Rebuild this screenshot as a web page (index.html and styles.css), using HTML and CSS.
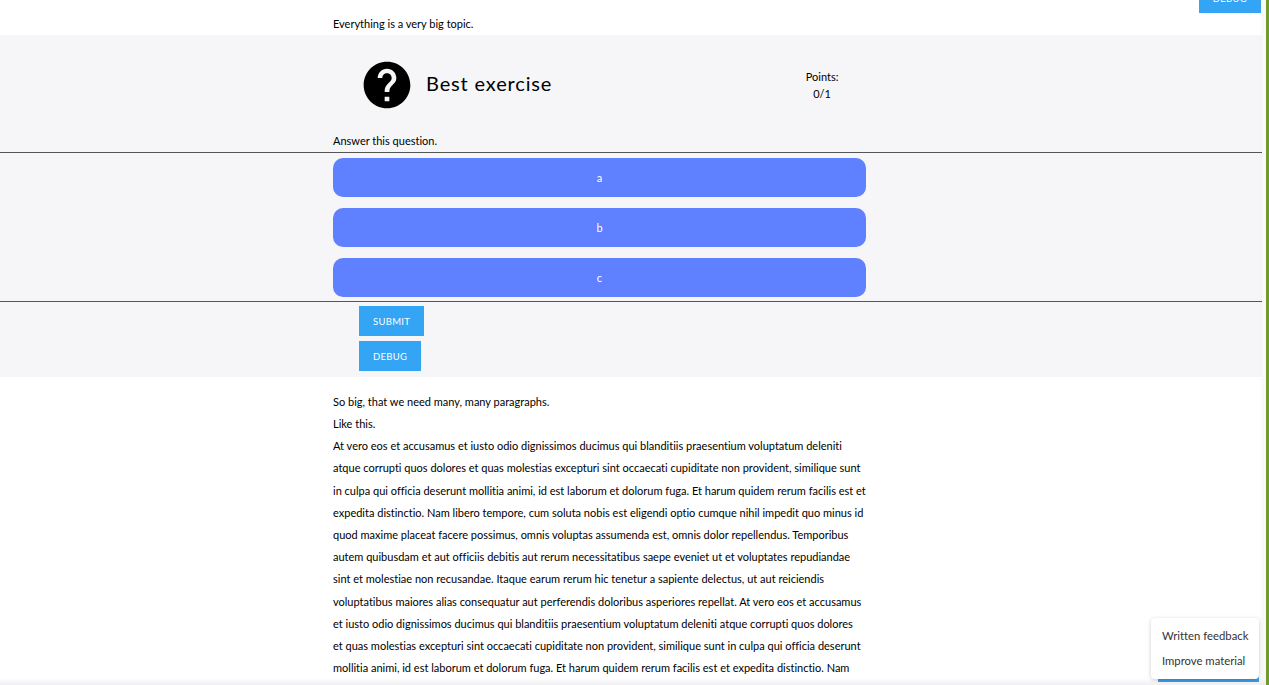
FILE: index.html
```html
<!DOCTYPE html>
<html lang="en">
<head>
  <meta charset="UTF-8">
  <title>Best exercise</title>
  <link rel="stylesheet" href="styles.css">
</head>
<body>

<div class="page">
  <div class="top-bar">
    <button type="button" class="btn">DEBUG</button>
  </div>

  <div class="column intro">
    <p>Everything is a very big topic.</p>
  </div>

  <!-- Exercise -->
  <section class="exercise">
    <div class="column">
      <div class="exercise-head">
        <div class="exercise-title">
          <svg class="help-icon" viewBox="0 0 24 24" width="56" height="56">
            <path d="M12 2C6.48 2 2 6.48 2 12s4.48 10 10 10 10-4.48 10-10S17.52 2 12 2zm1 17h-2v-2h2v2zm2.07-7.75l-.9.92C13.45 12.9 13 13.5 13 15h-2v-.5c0-1.1.45-2.1 1.17-2.83l1.24-1.26c.37-.36.59-.86.59-1.41 0-1.1-.9-2-2-2s-2 .9-2 2H8c0-2.21 1.79-4 4-4s4 1.79 4 4c0 .88-.36 1.68-.93 2.25z"/>
          </svg>
          <h2>Best exercise</h2>
        </div>
        <div class="points">
          <div>Points:</div>
          <div>0/1</div>
        </div>
      </div>
      <p class="assignment">Answer this question.</p>
    </div>

    <div class="options">
      <div class="column option-list">
        <button type="button" class="option">a</button>
        <button type="button" class="option">b</button>
        <button type="button" class="option">c</button>
      </div>
    </div>

    <div class="column actions">
      <button type="button" class="btn">SUBMIT</button>
      <button type="button" class="btn">DEBUG</button>
    </div>
  </section>

  <!-- Material -->
  <div class="column material">
    <p>So big, that we need many, many paragraphs.</p>
    <p>Like this.</p>
    <p>At vero eos et accusamus et iusto odio dignissimos ducimus qui blanditiis praesentium voluptatum deleniti<br>
    atque corrupti quos dolores et quas molestias excepturi sint occaecati cupiditate non provident, similique sunt<br>
    in culpa qui officia deserunt mollitia animi, id est laborum et dolorum fuga. Et harum quidem rerum facilis est et<br>
    expedita distinctio. Nam libero tempore, cum soluta nobis est eligendi optio cumque nihil impedit quo minus id<br>
    quod maxime placeat facere possimus, omnis voluptas assumenda est, omnis dolor repellendus. Temporibus<br>
    autem quibusdam et aut officiis debitis aut rerum necessitatibus saepe eveniet ut et voluptates repudiandae<br>
    sint et molestiae non recusandae. Itaque earum rerum hic tenetur a sapiente delectus, ut aut reiciendis<br>
    voluptatibus maiores alias consequatur aut perferendis doloribus asperiores repellat. At vero eos et accusamus<br>
    et iusto odio dignissimos ducimus qui blanditiis praesentium voluptatum deleniti atque corrupti quos dolores<br>
    et quas molestias excepturi sint occaecati cupiditate non provident, similique sunt in culpa qui officia deserunt<br>
    mollitia animi, id est laborum et dolorum fuga. Et harum quidem rerum facilis est et expedita distinctio. Nam</p>
  </div>
</div>

<div class="bottom-edge"></div>

<!-- Feedback menu -->
<div class="feedback-btn"></div>
<div class="feedback-menu">
  <div class="feedback-item">Written feedback</div>
  <div class="feedback-item">Improve material</div>
</div>

<div class="edge"></div>

</body>
</html>
```

FILE: styles.css
```css
html, body { height: 100%; }
body { margin: 0; overflow: hidden; background: #fff; font-family: "Lato", sans-serif; font-size: 11px; color: #000; font-variant-ligatures: none; }
p { margin: 0; }

.page { width: 1262px; margin-top: -17px; }
.column { width: 533px; margin-left: 333px; }

.top-bar { display: flex; justify-content: flex-end; padding-right: 1px; height: 30px; }
.intro { height: 22px; line-height: 22px; }

.btn { height: 30px; padding: 0 14px; border: 0; background: #34a4f5; color: #fff; font-family: "Lato", sans-serif; font-size: 9.5px; letter-spacing: 0.3px; }

.exercise { background: #f6f6f9; height: 342px; }
.exercise-head { display: flex; align-items: center; height: 98px; padding-top: 1px; box-sizing: border-box; }
.exercise-title { display: flex; align-items: center; width: 446px; padding-left: 26px; box-sizing: border-box; }
.help-icon { display: block; }
.exercise-title h2 { margin: 0 0 3px 11px; font-family: "Lato", sans-serif; font-size: 20px; font-weight: 400; letter-spacing: 0.85px; color: #000; }
.points { width: 88px; text-align: center; line-height: 17px; }
.assignment { line-height: 16px; }

.options { border-top: 1px solid #555; border-bottom: 1px solid #555; margin-top: 3px; }
.option-list { display: flex; flex-direction: column; gap: 11px; padding: 5px 0 4px; }
.option { height: 39px; border: 0; border-radius: 10px; background: #5f80ff; color: #fff; font-family: "Lato", sans-serif; font-size: 11px; }

.actions { display: flex; flex-direction: column; align-items: flex-start; gap: 5px; padding: 4px 0 0 26px; box-sizing: border-box; }

.material { padding-top: 13.7px; line-height: 22.2px; white-space: nowrap; }

.bottom-edge { position: absolute; left: 0; right: 0; bottom: 0; height: 7px; background: linear-gradient(rgba(240,240,245,0), #f0f0f5); }

.feedback-btn { position: absolute; left: 1158px; top: 653px; width: 101px; height: 29px; background: #3b9ce6; }
.feedback-menu { position: absolute; left: 1151px; top: 618px; width: 108px; height: 61px; background: #fff; border-radius: 4px; box-shadow: 0 1px 4px rgba(0,0,0,0.2); }
.feedback-item { height: 25px; line-height: 25px; padding-left: 11px; margin-top: 5px; color: #333; font-size: 11.3px; }
.feedback-item + .feedback-item { margin-top: 0; }

.edge { position: absolute; top: 0; right: 0; width: 3px; height: 100%; background: #6f9c2c; box-shadow: -3px 0 5px rgba(0,0,0,0.07); }
```
